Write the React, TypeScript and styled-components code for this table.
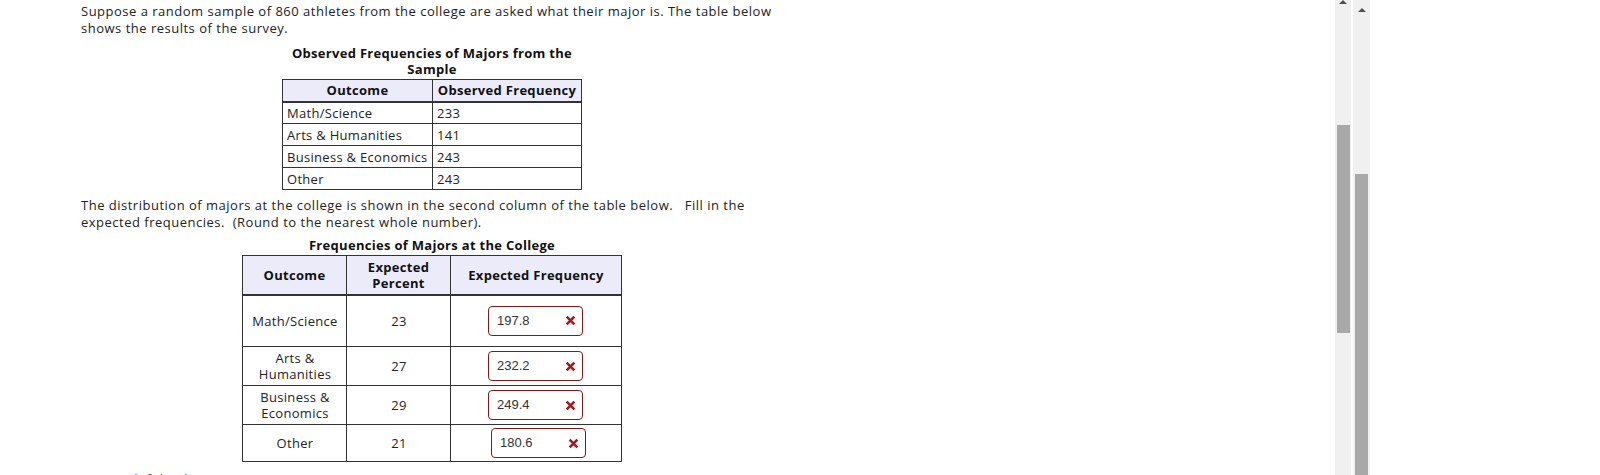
import React from "react";
import styled, { createGlobalStyle } from "styled-components";

const Global = createGlobalStyle`
  html, body { margin: 0; padding: 0; background: #fff; }
  body { font-family: "Open Sans", "DejaVu Sans", sans-serif; color: #222; overflow: hidden; }
`;

const Page = styled.div`
  display: flex;
  width: 1600px;
  height: 475px;
  overflow: hidden;
`;

const Content = styled.div`
  width: 1335px;
  flex: none;
  padding: 3px 0 0 81px;
  box-sizing: border-box;
`;

const Question = styled.div`
  width: 702px;
  font-size: 13px;
  letter-spacing: 0.5px;
  line-height: 17px;
`;

const Para = styled.p<{ $top?: number }>`
  margin: ${(p) => p.$top ?? 0}px 0 0;
`;

const Caption = styled.caption`
  font-weight: 700;
  font-size: 13px;
  letter-spacing: 0.3px;
  line-height: 16px;
  padding-bottom: 2px;
  color: #111;
`;

const Table = styled.table<{ $top: number; $w: number }>`
  margin: ${(p) => p.$top}px auto 0;
  width: ${(p) => p.$w}px;
  border-collapse: collapse;
  border: 1px solid #333;
  font-size: 13px;
  letter-spacing: 0.3px;
  table-layout: fixed;
`;

const Th = styled.th<{ $w?: number }>`
  background: #ebebfa;
  border: 1px solid #333;
  border-bottom: 2px solid #333;
  font-weight: 700;
  padding: 0 3px;
  line-height: 16px;
  text-align: center;
  color: #111;
  ${(p) => (p.$w ? `width: ${p.$w}px;` : "")}
`;

const Td = styled.td<{ $center?: boolean; $nowrap?: boolean }>`
  border: 1px solid #333;
  padding: 0 3px 0 4px;
  line-height: 16px;
  text-align: ${(p) => (p.$center ? "center" : "left")};
  white-space: ${(p) => (p.$nowrap ? "nowrap" : "normal")};
  color: #222;
`;

const Row = styled.tr<{ $h: number }>`
  height: ${(p) => p.$h}px;
`;

const Answer = styled.div<{ $shift?: number }>`
  display: flex;
  align-items: center;
  justify-content: space-between;
  width: 95px;
  height: 30px;
  box-sizing: border-box;
  margin-left: ${(p) => 33 + (p.$shift ?? 0)}px;
  padding: 0 6px 0 8px;
  border: 1px solid #7a1c1c;
  border-radius: 4px;
  font-family: "Liberation Sans", Arial, sans-serif;
  font-size: 13px;
  letter-spacing: 0;
  color: #333;
  background: #fff;
`;

const Wrong = styled.svg`
  width: 11px;
  height: 11px;
  flex: none;
`;

const Hint = styled.div`
  margin-top: 9px;
  line-height: 17px;
  color: #444;
`;

const Gap = styled.div`
  width: 2px;
  flex: none;
`;

const Track = styled.div<{ $w: number }>`
  width: ${(p) => p.$w}px;
  flex: none;
  background: #f0f0f0;
  display: flex;
  flex-direction: column;
  align-items: center;
  height: 475px;
`;

const Arrow = styled.div<{ $top: number }>`
  margin-top: ${(p) => p.$top}px;
  width: 0;
  height: 0;
  border-left: 4px solid transparent;
  border-right: 4px solid transparent;
  border-bottom: 4px solid #505050;
`;

const Thumb = styled.div<{ $top: number; $h: number }>`
  margin-top: ${(p) => p.$top}px;
  width: 13px;
  height: ${(p) => p.$h}px;
  background: #a8a8a8;
  flex: none;
`;

const X = () => (
  <Wrong viewBox="0 0 10 10">
    <path d="M1.5 1.5 L8.5 8.5 M8.5 1.5 L1.5 8.5" stroke="#a8161b" strokeWidth="2.3" strokeLinecap="butt" />
  </Wrong>
);

const observed = [
  ["Math/Science", "233"],
  ["Arts & Humanities", "141"],
  ["Business & Economics", "243"],
  ["Other", "243"],
];

const expected: { o: React.ReactNode; p: string; v: string; h: number; s?: number }[] = [
  { o: "Math/Science", p: "23", v: "197.8", h: 52 },
  { o: <>Arts &amp;<br />Humanities</>, p: "27", v: "232.2", h: 39 },
  { o: <>Business &amp;<br />Economics</>, p: "29", v: "249.4", h: 39 },
  { o: "Other", p: "21", v: "180.6", h: 37, s: 3 },
];

export default function App() {
  return (
    <>
      <Global />
      <Page>
        <Content>
          <Question>
            <Para>
              Suppose a random sample of 860 athletes from the college are asked what their major is. The table below
              shows the results of the survey.
            </Para>
            <Table $top={8} $w={300}>
              <Caption>Observed Frequencies of Majors from the Sample</Caption>
              <thead>
                <Row $h={22}>
                  <Th $w={143}>Outcome</Th>
                  <Th>Observed Frequency</Th>
                </Row>
              </thead>
              <tbody>
                {observed.map(([o, f]) => (
                  <Row key={o} $h={22}>
                    <Td $nowrap>{o}</Td>
                    <Td $nowrap>{f}</Td>
                  </Row>
                ))}
              </tbody>
            </Table>
            <Para $top={7}>
              The distribution of majors at the college is shown in the second column of the table below.&nbsp;&nbsp; Fill in the
              expected frequencies.&nbsp; (Round to the nearest whole number).
            </Para>
            <Table $top={6} $w={380}>
              <Caption>Frequencies of Majors at the College</Caption>
              <thead>
                <Row $h={39}>
                  <Th $w={97}>Outcome</Th>
                  <Th $w={97}>
                    Expected
                    <br />
                    Percent
                  </Th>
                  <Th>Expected Frequency</Th>
                </Row>
              </thead>
              <tbody>
                {expected.map((r) => (
                  <Row key={r.p} $h={r.h}>
                    <Td $center>{r.o}</Td>
                    <Td $center>{r.p}</Td>
                    <Td>
                      <Answer $shift={r.s}>
                        <span>{r.v}</span>
                        <X />
                      </Answer>
                    </Td>
                  </Row>
                ))}
              </tbody>
            </Table>
            <Hint>Hint: Helpful Video ↗ [+]</Hint>
          </Question>
        </Content>
        <Track $w={16}>
          <Arrow $top={0} />
          <Thumb $top={121} $h={208} />
        </Track>
        <Gap />
        <Track $w={17}>
          <Arrow $top={8} />
          <Thumb $top={162} $h={320} />
        </Track>
      </Page>
    </>
  );
}
